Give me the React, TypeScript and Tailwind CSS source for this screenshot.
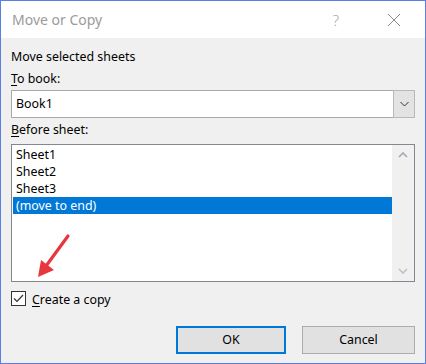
import React from "react";

const font = { fontFamily: '"Noto Sans", "Open Sans", sans-serif' };

export default function App() {
  return (
    <div
      className="relative flex h-[364px] w-[426px] flex-col border border-[#5a7fe2] bg-[#f0f0f0] text-[12.4px] leading-[16px] text-black"
      style={font}
    >
      {/* title bar */}
      <div className="flex h-[37px] items-center bg-white pl-[11px] pr-[20px]">
        <span className="text-[14px] text-[#9b9b9b]">Move or Copy</span>
        <span className="ml-auto mr-[48px] text-[15px] font-light text-[#a8a8a8]">?</span>
        <svg width="14" height="14" viewBox="0 0 14 14" className="mr-[4px]">
          <path d="M1 1 L13 13 M13 1 L1 13" stroke="#8a8a8a" strokeWidth="1" fill="none" />
        </svg>
      </div>

      {/* body */}
      <div className="flex flex-col px-[10px]">
        <div className="mt-[11px]">Move selected sheets</div>
        <div className="mt-[6px]">
          <u className="underline-offset-2">T</u>o book:
        </div>
        <div className="mt-[3px] flex h-[28px] border border-[#a9a9a9] bg-white">
          <div className="flex flex-1 items-center pl-[4px]">Book1</div>
          <div className="m-[-1px] flex w-[22px] items-center justify-center border border-[#b9b9b9] bg-[#e3e3e3]">
            <svg width="9" height="6" viewBox="0 0 9 6">
              <path d="M0.5 1 L4.5 5 L8.5 1" stroke="#333" strokeWidth="1" fill="none" />
            </svg>
          </div>
        </div>
        <div className="mt-[4px]">
          <u className="underline-offset-2">B</u>efore sheet:
        </div>
        <div className="mt-[6px] flex h-[138px] border border-[#828790] bg-white">
          <div className="flex flex-1 flex-col pl-[1px] pt-[1px]">
            <div className="h-[17px] pl-[3px] leading-[17px]">Sheet1</div>
            <div className="h-[17px] pl-[3px] leading-[17px]">Sheet2</div>
            <div className="h-[17px] pl-[3px] leading-[17px]">Sheet3</div>
            <div className="h-[17px] bg-[#0078d7] pl-[3px] leading-[17px] text-white">(move to end)</div>
          </div>
          <div className="flex w-[22px] flex-col items-center justify-between bg-[#f0f0f0] py-[7px]">
            <svg width="10" height="6" viewBox="0 0 10 6">
              <path d="M1 5 L5 1 L9 5" stroke="#a6a6a6" strokeWidth="1.6" fill="none" />
            </svg>
            <svg width="10" height="6" viewBox="0 0 10 6">
              <path d="M1 1 L5 5 L9 1" stroke="#c0c0c0" strokeWidth="1.6" fill="none" />
            </svg>
          </div>
        </div>
        <div className="mt-[7px] flex items-center">
          <div className="flex h-[15px] w-[15px] items-center justify-center border border-[#333] bg-white">
            <svg width="11" height="9" viewBox="0 0 11 9">
              <path d="M1 4.5 L4 7.5 L10 1" stroke="#333" strokeWidth="1.2" fill="none" />
            </svg>
          </div>
          <span className="ml-[6px] mt-[3px]">
            <u className="underline-offset-2">C</u>reate a copy
          </span>
        </div>
        <div className="mt-[18px] flex justify-end gap-[16px]">
          <button className="flex h-[28px] w-[110px] items-center justify-center border-2 border-[#0078d7] bg-[#e1e1e1]">
            OK
          </button>
          <button className="flex h-[28px] w-[113px] items-center justify-center border border-[#adadad] bg-[#e1e1e1]">
            Cancel
          </button>
        </div>
      </div>

      {/* annotation arrow */}
      <svg className="pointer-events-none absolute left-0 top-0" width="426" height="364">
        <path d="M67 235 L45 265" stroke="#e8363d" strokeWidth="3.2" strokeLinecap="round" fill="none" />
        <path d="M37 276 L40 259 L53 269 Z" fill="#e8363d" />
      </svg>
    </div>
  );
}
